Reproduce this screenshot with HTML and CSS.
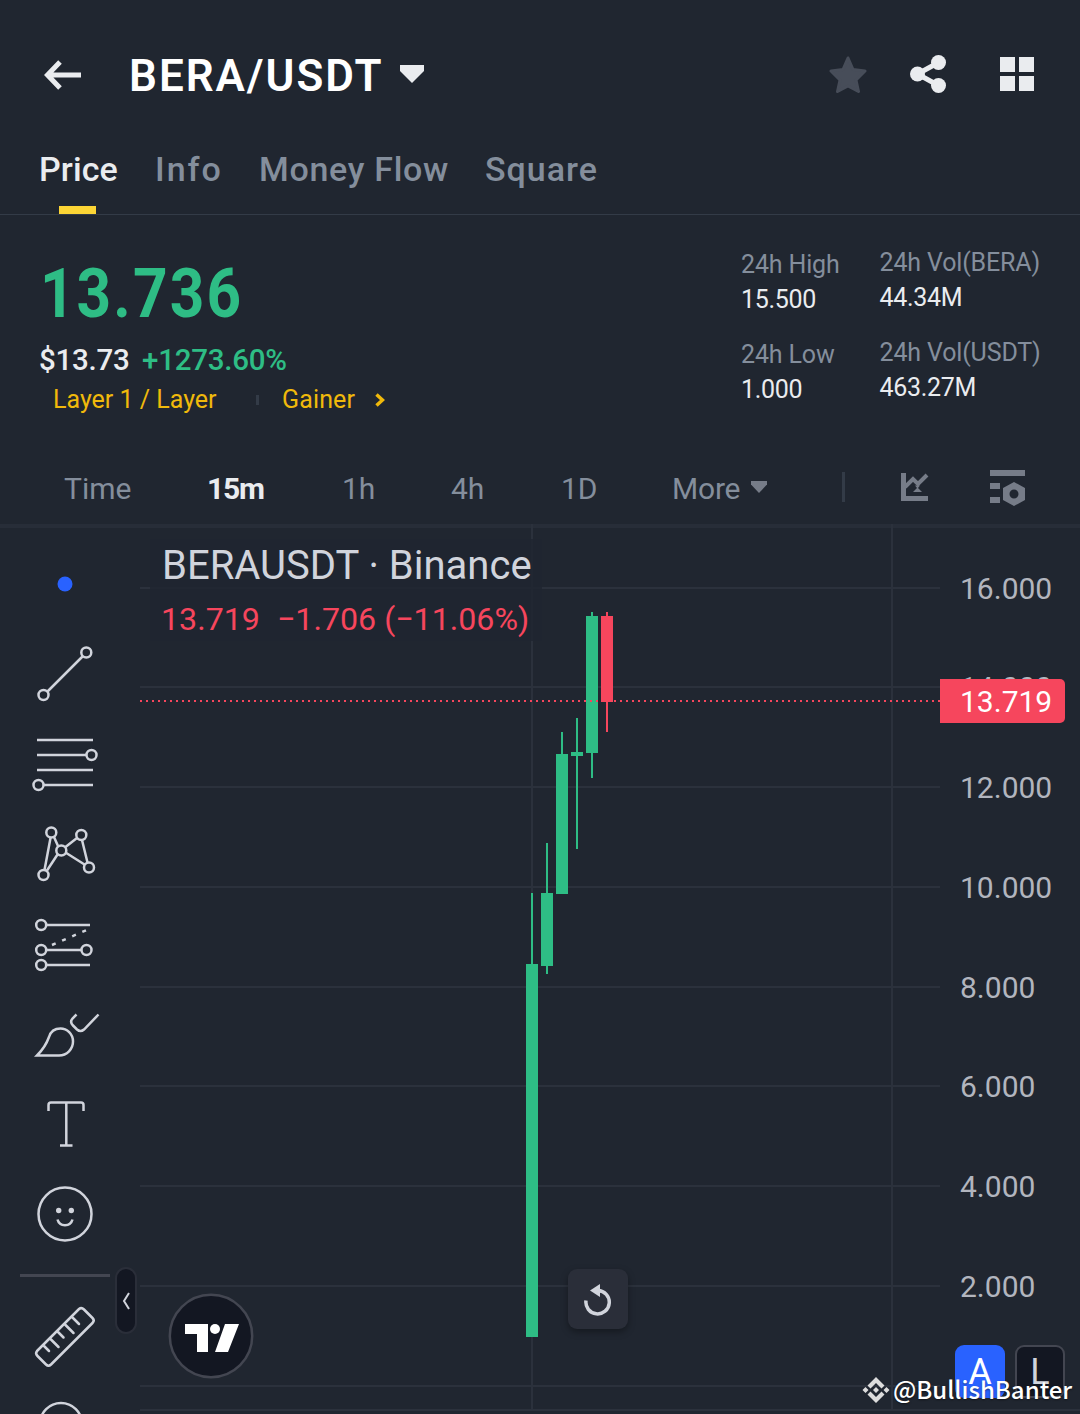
FILE: index.html
```html
<!DOCTYPE html>
<html lang="en">
<head>
<meta charset="utf-8">
<title>BERA/USDT</title>
<link rel="stylesheet" href="styles.css">
</head>
<body>
<header class="topbar">
  <svg class="back" width="38" height="32" viewBox="0 0 38 32"><path d="M16 3 3.500 16 16 29M4 16H37" fill="none" stroke="#eaecef" stroke-width="5"/></svg>
  <h1 class="pair">BERA/USDT</h1>
  <svg class="caret" width="24" height="18" viewBox="0 0 24 18"><path d="M0 0H24V6L12 18 0 6Z" fill="#eaecef"/></svg>
  <svg class="star" width="38" height="40" viewBox="0 0 38 40"><path d="M19 3 24 14.500 36 16 27 25 29.500 36.500 19 31 8.500 36.500 11 25 2 16 14 14.500Z" fill="#474d59" stroke="#474d59" stroke-width="3" stroke-linejoin="round"/></svg>
  <svg class="share" width="36" height="38" viewBox="0 0 36 38"><path d="M28.500 7.500 7.500 19 28.500 30.500" fill="none" stroke="#eaecef" stroke-width="5"/><g fill="#eaecef"><circle cx="28.500" cy="7.500" r="7.500"/><circle cx="7.500" cy="19" r="7.500"/><circle cx="28.500" cy="30.500" r="7.500"/></g></svg>
  <svg class="grid-icon" width="34" height="34" viewBox="0 0 34 34"><path d="M0 0H15V15H0ZM19 0H34V15H19ZM0 19H15V34H0ZM19 19H34V34H19Z" fill="#eaecef"/></svg>
</header>
<nav class="tabs">
  <span class="tab tab-price active">Price</span>
  <span class="tab tab-info">Info</span>
  <span class="tab tab-flow">Money Flow</span>
  <span class="tab tab-square">Square</span>
</nav>
<section class="stats">
  <div class="quote">
    <div class="last">13.736</div>
    <div class="change"><span class="usd">$13.73</span><span class="pct">+1273.60%</span></div>
    <div class="tags"><span class="layer">Layer 1 / Layer</span><i class="tag-sep"></i><span class="gainer">Gainer</span><svg width="10" height="14" viewBox="0 0 10 14"><path d="M1.500 1.500 7.500 7 1.500 12.500" fill="none" stroke="#f0b90b" stroke-width="3.500"/></svg></div>
  </div>
  <dl class="day day-price"><dt>24h High</dt><dd>15.500</dd><dt>24h Low</dt><dd>1.000</dd></dl>
  <dl class="day day-vol"><dt>24h Vol(BERA)</dt><dd>44.34M</dd><dt>24h Vol(USDT)</dt><dd>463.27M</dd></dl>
</section>
<nav class="intervals">
  <span class="iv iv-time">Time</span>
  <span class="iv iv-15 on">15m</span>
  <span class="iv iv-1h">1h</span>
  <span class="iv iv-4h">4h</span>
  <span class="iv iv-1d">1D</span>
  <span class="iv iv-more">More</span>
  <svg class="more-caret" width="16" height="12" viewBox="0 0 16 12"><path d="M0 0H16V3.500L8 12 0 3.500Z" fill="#767c88"/></svg>
  <i class="iv-sep"></i>
  <svg class="kline" width="28" height="28" viewBox="0 0 28 28"><g fill="none" stroke="#767c88"><path d="M2.500 0V25.500H27" stroke-width="5"/><path d="M4 14 12 6 17 11 26 2" stroke-width="4"/></g><path d="M14 12.500H19L17 15 21 19H12L16 15Z" fill="#767c88"/></svg>
  <svg class="settings" width="35" height="36" viewBox="0 0 35 36"><path d="M0 0H35V6H0ZM0 13H10V19H0ZM0 27H10V33H0Z" fill="#767c88"/><path fill-rule="evenodd" d="M24 12 35 18V30L24 36 13 30V18ZM24 19.500A4.500 4.500 0 1 0 24 28.500 4.500 4.500 0 1 0 24 19.500Z" fill="#767c88"/></svg>
</nav>
<main class="chart">
  <aside class="tools">
    <svg class="tool" viewBox="0 0 130 90"><circle cx="65" cy="45" r="7.500" fill="#2962ff"/></svg>
    <svg class="tool" viewBox="0 629 130 90"><circle cx="86.300" cy="652.500" r="5"/><circle cx="43.500" cy="695" r="5"/><path d="M82.500 656.500 47.500 691.500"/></svg>
    <svg class="tool" viewBox="0 719 130 90"><path d="M37 740H93M37 755H86M37 770H93M44 785H93"/><circle cx="91.500" cy="755" r="5"/><circle cx="38.500" cy="785" r="5"/></svg>
    <svg class="tool" viewBox="0 809 130 90"><path d="M50.500 838 44.500 870M54 837 58 846M57.500 854.500 47 870.500M65.500 847 77 838M82 840 87.500 862.500M65.500 852.500 84.500 864.500"/><circle cx="51.300" cy="832.500" r="5"/><circle cx="81.300" cy="835" r="5"/><circle cx="61.300" cy="850.500" r="5"/><circle cx="43.500" cy="875" r="5"/><circle cx="89" cy="867.500" r="5"/></svg>
    <svg class="tool" viewBox="0 899 130 90"><circle cx="41.200" cy="925" r="5"/><circle cx="41.200" cy="950" r="5"/><circle cx="86.500" cy="950" r="5"/><circle cx="41.200" cy="965" r="5"/><path d="M47 925H90M47 950H81M47 965H90"/><path d="M52 945 88 929.500" stroke-dasharray="4 7"/></svg>
    <svg class="tool" viewBox="0 989 130 90"><path d="M37 1055.500H59C67 1055.500 73 1049 73 1041.500 73 1034 67 1028.500 60.500 1028.500 54 1028.500 50.500 1032 49 1037 46.500 1044 42 1050.500 37 1055.500ZM76.500 1014.500 72.500 1018.500Q69.500 1022 73 1025.500L77 1029.500Q80.500 1032.500 84 1029.500L98.500 1014.500"/></svg>
    <svg class="tool" viewBox="0 1079 130 90"><path d="M48.500 1111V1105Q48.500 1102.500 51 1102.500H81Q83.500 1102.500 83.500 1105V1111M66.300 1102.500V1145M60 1145.500H72.500"/></svg>
    <svg class="tool" viewBox="0 1169 130 90"><circle cx="65" cy="1214" r="26.500"/><circle class="dot" cx="58.700" cy="1210.500" r="2.700"/><circle class="dot" cx="71.300" cy="1210.500" r="2.700"/><path d="M57.500 1219.500C59.500 1227 70.500 1227 72.500 1219.500"/></svg>
    <i class="tool-sep"></i>
    <svg class="tool" viewBox="0 1292 130 90"><path d="M37 1351 79 1309Q81.500 1307 84 1309.500L92.500 1318Q95 1320.500 92.500 1323L51 1364.500Q48.500 1367 46 1364.500L37.500 1356Q35 1353.500 37 1351ZM43.500 1345.500 49 1351M50 1338.500 58.500 1347M57.500 1331.500 63.500 1337.500M65 1324.500 73.500 1333M72 1317 79 1324" stroke-linecap="round"/></svg>
    <svg class="tool" viewBox="0 1382 130 90"><circle cx="61" cy="1424" r="21"/></svg>
  </aside>
  <svg class="plot" width="800" height="890" viewBox="140 524 800 890" shape-rendering="crispEdges">
    <path d="M140 588H940M140 687H940M140 787H940M140 887H940M140 987H940M140 1086H940M140 1186H940M140 1286H940M140 1386H940M140 1410H940M532 524V1409M892 524V1409" stroke="#2b313c" stroke-width="2"/>
    <g fill="#2ebd85"><path d="M526 964h12v373h-12zM531 893h2v72h-2z"/><path d="M541 893h12v73h-12zM546 843h2v131h-2z"/><path d="M556 754h12v140h-12zM561 732h2v30h-2z"/><path d="M571 752h12v4h-12zM576 718h2v131h-2z"/><path d="M586 616h12v137h-12zM591 612h2v166h-2z"/></g>
    <path d="M601 616h12v86h-12zM606 612h2v120h-2z" fill="#f6465d"/>
    <path d="M140 701H940" stroke="#f6465d" stroke-width="2" stroke-dasharray="2 4"/>
  </svg>
  <div class="axis">
    <span>16.000</span><span>14.000</span><span>12.000</span><span>10.000</span><span>8.000</span><span>6.000</span><span>4.000</span><span>2.000</span>
  </div>
  <div class="legend"><div class="symbol">BERAUSDT · Binance</div><div class="delta"><span>13.719</span><span>−1.706 (−11.06%)</span></div></div>
  <div class="price-badge">13.719</div>
  <div class="collapse"><svg width="9" height="20" viewBox="0 0 9 20"><path d="M7 2 2 10 7 18" fill="none" stroke="#d1d4dc" stroke-width="2"/></svg></div>
  <svg class="tv" width="86" height="86" viewBox="168 1293 86 86"><circle cx="211" cy="1336" r="41.200" fill="#131722" stroke="#434651" stroke-width="2.500"/><path d="M185 1324H208V1352H197V1334H185ZM225 1324H239L228 1352H215Z" fill="#fff"/><circle cx="215" cy="1329" r="5" fill="#fff"/></svg>
  <div class="reset"><svg width="30" height="34" viewBox="583 1282 30 34"><path d="M586 1300.500A11.700 11.700 0 1 0 598 1290.500" fill="none" stroke="#d1d4dc" stroke-width="3.500"/><path d="M590 1290.500 600 1284V1297Z" fill="#d1d4dc"/></svg></div>
  <div class="scale scale-auto">A</div>
  <div class="scale scale-log">L</div>
  <div class="handle"><svg width="28" height="28" viewBox="-14 -14 28 28"><path d="M-8.500 -4.500 0 -13 8.500 -4.500 5.500 -1.500 0 -7 -5.500 -1.500ZM-8.500 4.500 0 13 8.500 4.500 5.500 1.500 0 7 -5.500 1.500ZM-13.500 0l3-3 3 3-3 3ZM7.500 0l3-3 3 3-3 3ZM-3 0l3-3 3 3-3 3Z" fill="#dcdcdc"/></svg><span>@BullishBanter</span></div>
</main>
</body>
</html>
```
FILE: styles.css
```css
* { box-sizing: border-box; }
body {
  margin: 0;
  width: 1080px;
  height: 1414px;
  overflow: hidden;
  background: #202630;
  color: #eaecef;
  font-family: Roboto, "Liberation Sans", sans-serif;
}
svg { display: block; flex: none; }
span, .last { white-space: nowrap; }

.topbar { display: flex; align-items: center; height: 124px; padding: 26px 46px 0 44px; }
.pair { width: 256px; margin: 0 0 0 47px; padding-top: 2px; font-size: 44px; font-weight: 600; line-height: 60px; color: #fff; letter-spacing: 1.950px; white-space: nowrap; }
.caret { margin-left: 15px; margin-bottom: 2px; }
.star { margin-left: auto; }
.share { margin-left: 43px; margin-bottom: 2px; }
.grid-icon { margin-left: 54px; margin-bottom: 2px; }

.tabs { display: flex; height: 91px; padding-left: 39px; border-bottom: 1px solid #333b47; line-height: 90px; font-size: 34px; font-weight: 500; color: #848e9c; }
.tab-price { width: 116px; letter-spacing: .1px; }
.tab-info { width: 104px; letter-spacing: 2px; }
.tab-flow { width: 226px; letter-spacing: .7px; }
.tab-square { letter-spacing: 1px; }
.active { position: relative; color: #eaecef; }
.active::after { content: ""; position: absolute; left: 20px; bottom: 0; width: 37px; height: 8px; background: #fcd535; }

.stats { display: flex; height: 235px; }
.quote { width: 741px; padding: 37px 0 0 39px; }
.last { height: 85px; line-height: 83px; font-size: 69px; font-weight: 700; color: #2ebd85; letter-spacing: 2.400px; transform: scaleX(.875); transform-origin: 0 50%; padding-left: 1px; }
.change { display: flex; height: 43px; line-height: 46px; font-size: 29.500px; font-weight: 500; letter-spacing: -.25px; }
.usd { width: 103px; }
.pct { color: #2ebd85; }
.tags { display: flex; align-items: center; height: 40px; padding-left: 14px; line-height: 40px; font-size: 25px; color: #f0b90b; }
.layer { width: 203px; }
.tag-sep { width: 3px; height: 10px; margin-right: 23px; background: #333b47; }
.gainer { width: 93px; letter-spacing: .15px; }
.day { margin: 0; font-size: 25px; line-height: 35px; letter-spacing: -.15px; white-space: nowrap; }
.day-price { width: 138.500px; padding-top: 32px; }
.day-vol { padding-top: 30px; }
.day dt { color: #848e9c; }
.day dd { margin: 0 0 20px; letter-spacing: -.3px; }

.intervals { display: flex; align-items: center; height: 78px; padding-left: 64px; border-bottom: 4px solid #272d38; font-size: 30px; line-height: 40px; color: #848e9c; }
.iv { padding-top: 4px; }
.iv-time { width: 143px; }
.iv-15 { width: 135px; }
.iv-1h { width: 109px; }
.iv-4h { width: 110px; }
.iv-1d { width: 111px; }
.iv-more { width: 79px; letter-spacing: -.2px; }
.on { color: #eaecef; font-weight: 700; letter-spacing: -1.200px; }
.iv-sep { width: 3px; height: 30px; margin-left: 75px; background: #333b47; }
.kline { margin-left: 56px; }
.settings { margin-left: 61px; margin-top: 2px; }

.chart { position: relative; display: flex; height: 886px; }
.tools { width: 140px; padding-top: 11px; }
.tool { display: block; width: 130px; height: 90px; fill: none; stroke: #d1d4dc; stroke-width: 2.500; }
.tool circle[fill] { stroke: none; }
.dot { fill: #d1d4dc; stroke: none; }
.tool-sep { display: block; width: 90px; height: 3px; margin: 15px 0 15px 20px; background: #434651; }
.plot { margin-top: -4px; }
.axis { display: flex; flex-direction: column; width: 140px; height: 883px; padding: 10.600px 0 0 20px; border-bottom: 2px solid #2b313c; font-size: 30px; line-height: 99.750px; color: #b2b5be; }

.legend { position: absolute; left: 150px; top: 11px; width: 392px; height: 102px; padding-left: 12px; background: rgba(32, 38, 48, .85); }
.symbol { height: 54px; line-height: 54px; font-size: 40px; color: #d1d4dc; white-space: nowrap; }
.delta { display: flex; gap: 17px; height: 54px; margin-left: -1px; line-height: 53px; font-size: 32.200px; color: #f6465d; }
.price-badge { position: absolute; left: 940px; top: 151px; width: 125px; height: 44px; padding-left: 20px; border-radius: 0 5px 5px 0; background: #f6465d; color: #fff; font-size: 30px; line-height: 45px; }
.collapse { position: absolute; left: 115px; top: 739px; width: 22px; height: 67px; display: flex; align-items: center; justify-content: center; border: 2px solid #2a2e39; border-radius: 11px; background: #131722; }
.tv { position: absolute; left: 168px; top: 765px; }
.reset { position: absolute; left: 568px; top: 741px; width: 60px; height: 60px; display: flex; align-items: center; justify-content: center; border-radius: 9px; background: #2a2e39; box-shadow: 0 3px 7px rgba(0, 0, 0, .35); }
.scale { position: absolute; top: 817px; width: 50px; height: 53px; border-radius: 9px; text-align: center; font-size: 36px; line-height: 54px; }
.scale-auto { left: 955px; background: #2962ff; color: #fff; }
.scale-log { left: 1015px; border: 2px solid #434651; background: #131722; color: #d1d4dc; line-height: 50px; }
.handle { position: absolute; left: 862px; top: 842px; display: flex; align-items: center; height: 40px; gap: 3px; color: #fff; font-family: "Noto Sans CJK SC", sans-serif; font-size: 24px; font-weight: 500; text-shadow: 0 1px 2px rgba(0, 0, 0, .5); }
.handle span { margin-top: -3px; }
```
